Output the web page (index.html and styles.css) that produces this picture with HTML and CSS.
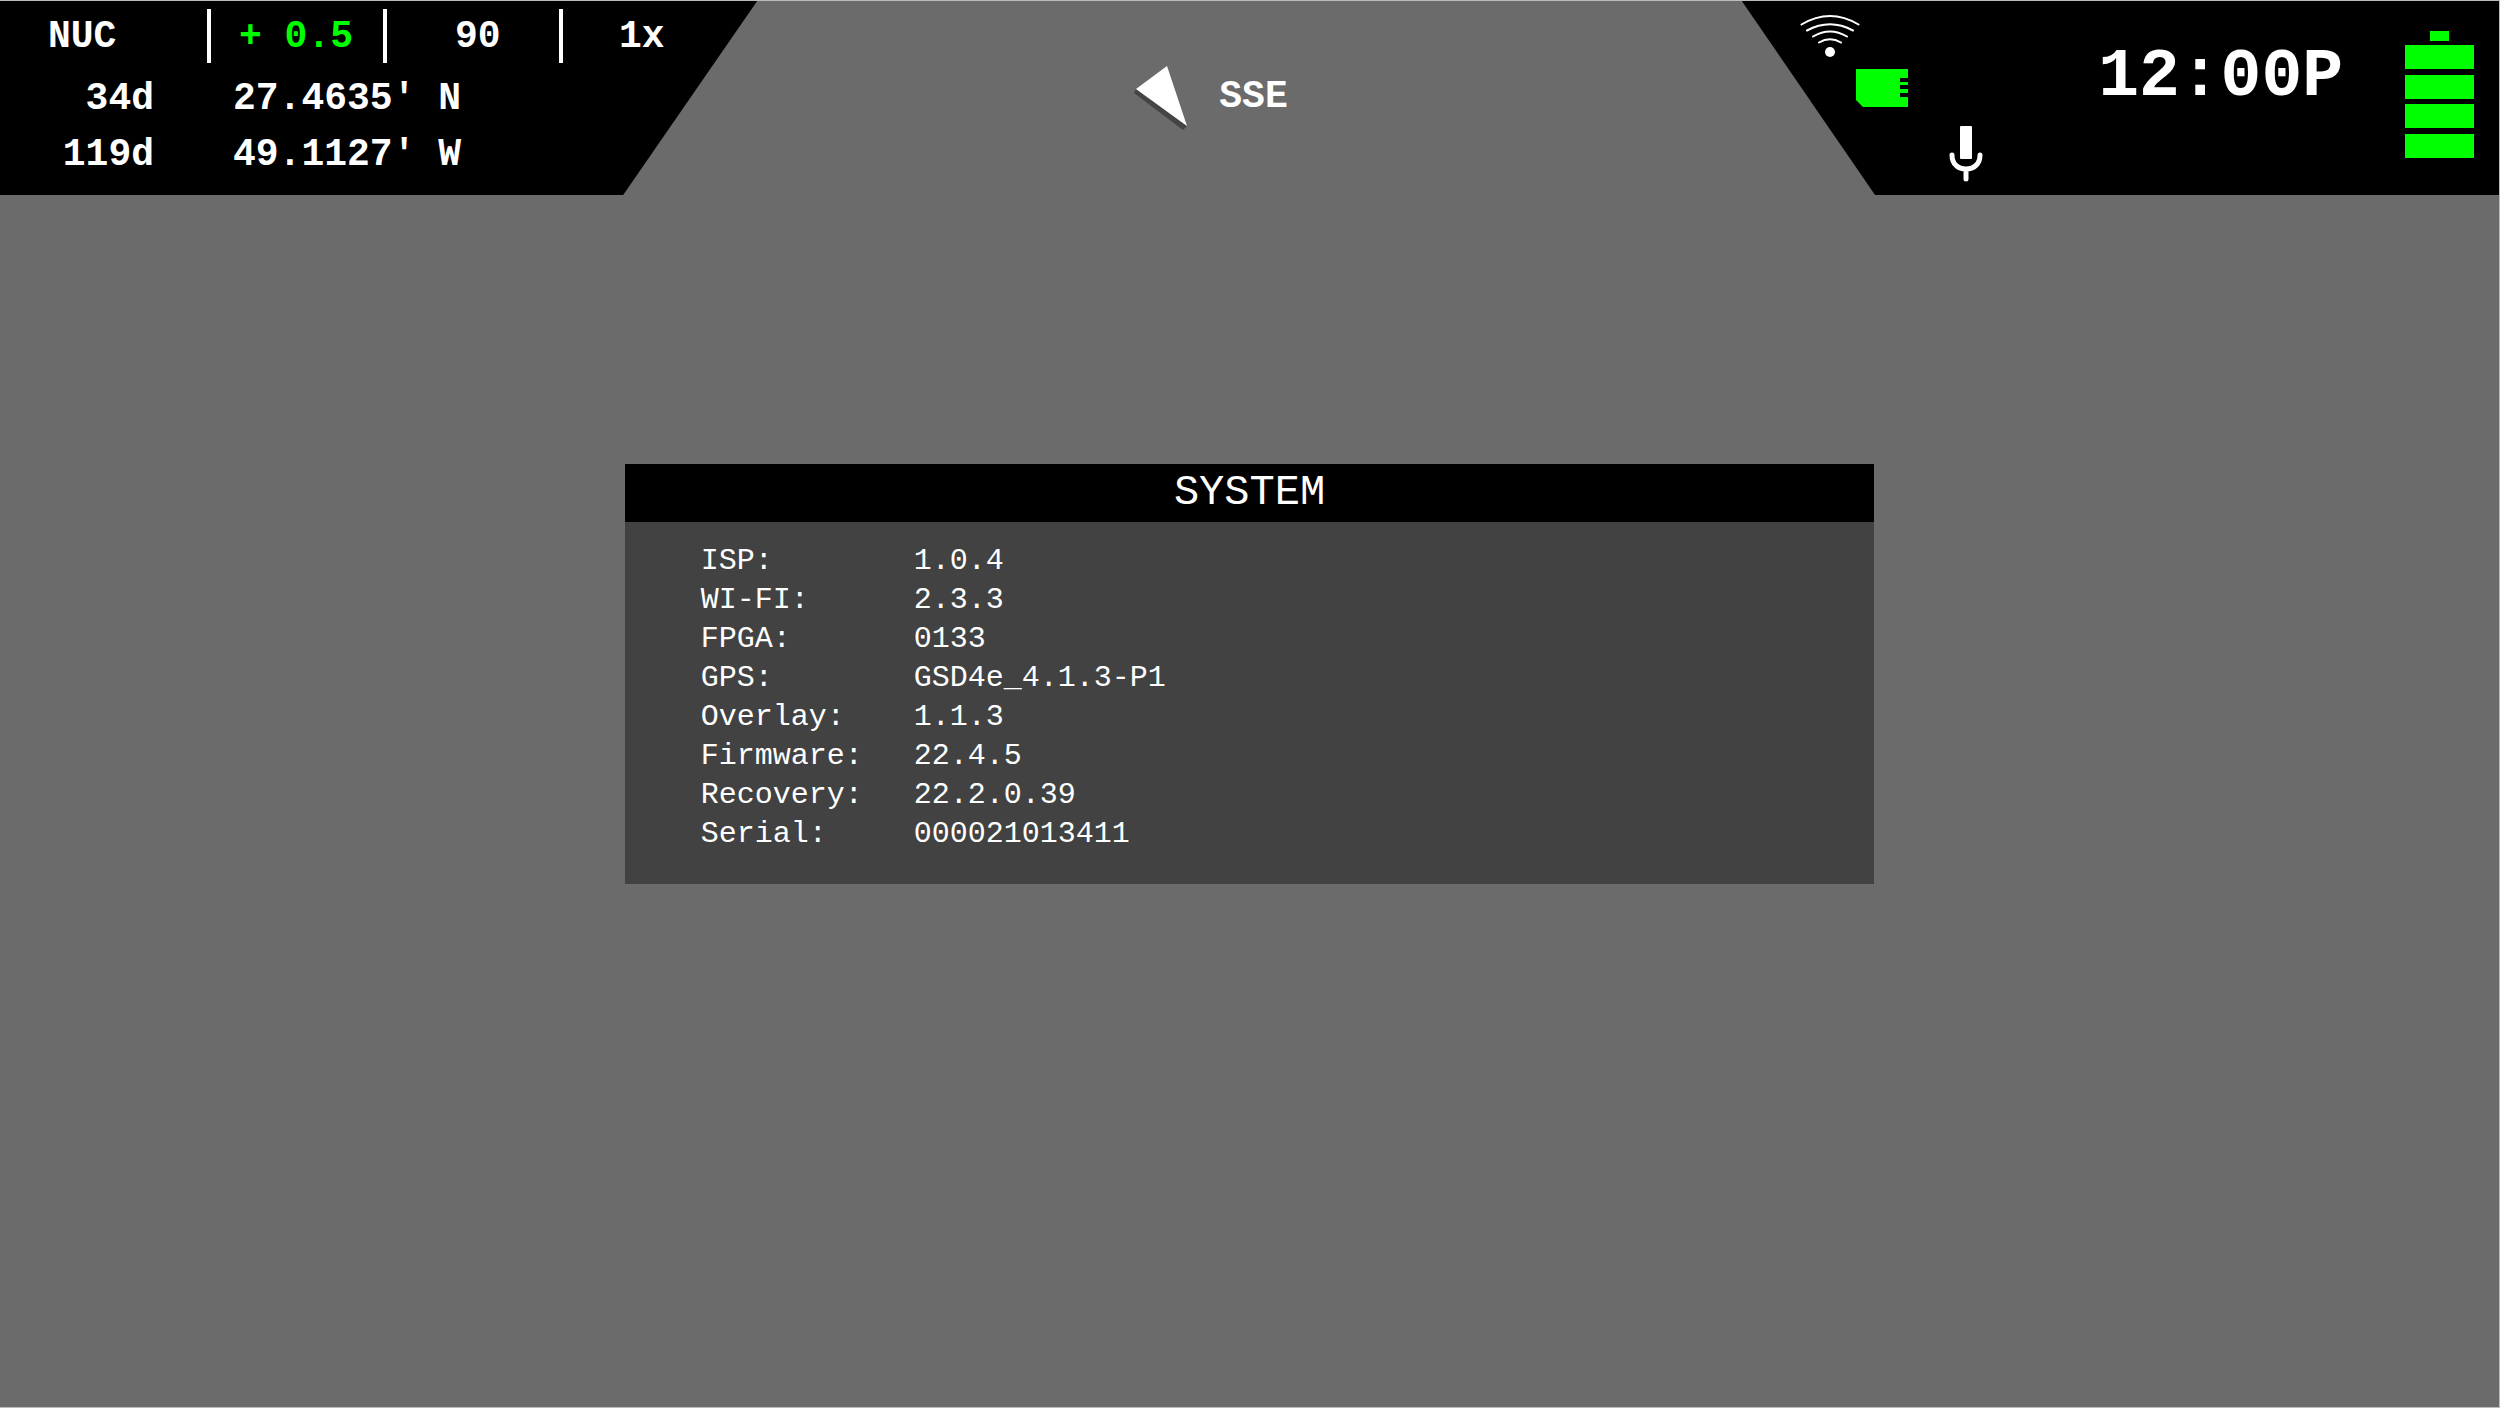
FILE: index.html
```
<!DOCTYPE html>
<html lang="en">
<head>
    <meta charset="UTF-8">
    <meta name="viewport" content="width=device-width, initial-scale=1.0">
    <title>System</title>
    <link rel="stylesheet" href="styles.css">
</head>
<body>
    <header class="hud">
        <div class="readout">
            <div class="modes">
                <span class="mode nuc">NUC</span>
                <span class="mode offset">+ 0.5</span>
                <span class="mode rate">90</span>
                <span class="mode zoom">1x</span>
            </div>
            <div class="coords">
                <span class="deg">34d</span>
                <span>27.4635' N</span>
                <span class="deg">119d</span>
                <span>49.1127' W</span>
            </div>
        </div>
        <div class="compass">
            <svg width="56" height="66" viewBox="0 0 56 66" aria-hidden="true">
                <path d="M2 25 L0 29 L49 66 L53 62 Z" fill="#444"/>
                <path d="M2 25 L33 2 L53 62 Z" fill="#fff"/>
            </svg>
            <span>SSE</span>
        </div>
        <div class="status">
            <div class="icons">
                <svg class="wifi" width="60" height="44" viewBox="0 0 60 44" aria-hidden="true">
                    <g fill="none" stroke="#fff" stroke-width="2" stroke-linecap="round">
                        <path d="M1.5 10.5 Q30 -6.500 58.500 10.500"/>
                        <path d="M7 16.500 Q30 4 53 16.500"/>
                        <path d="M13 22.500 Q30 12.500 47 22.500"/>
                        <path d="M19 28.500 Q30 22 41 28.500"/>
                    </g>
                    <circle cx="30" cy="38" r="5" fill="#fff"/>
                </svg>
                <svg class="card" width="52" height="38" viewBox="0 0 52 38" aria-hidden="true">
                    <path d="M0 0H52V9H44V13H52V16H44V20H52V24H44V28H52V38H7L0 31Z" fill="#0f0"/>
                </svg>
                <svg class="mic" width="34" height="56" viewBox="0 0 34 56" aria-hidden="true">
                    <rect x="11" y="0" width="12" height="33" rx="1" fill="#fff"/>
                    <path d="M3 29 C3 38 9 43 17 43 S31 38 31 29 M17 43 V53" fill="none" stroke="#fff" stroke-width="5" stroke-linecap="round"/>
                </svg>
            </div>
            <time class="clock">12:00P</time>
            <svg class="battery" width="69" height="127" viewBox="0 0 69 127" aria-hidden="true">
                <path d="M25 0H44V10H25Z M0 14H69V38H0Z M0 44H69V68H0Z M0 73H69V97H0Z M0 103H69V127H0Z" fill="#0f0"/>
            </svg>
        </div>
    </header>
    <main class="panel">
        <h1 class="title">SYSTEM</h1>
        <div class="content">
            <table class="info">
                <tr><th scope="row">ISP:</th><td>1.0.4</td></tr>
                <tr><th scope="row">WI-FI:</th><td>2.3.3</td></tr>
                <tr><th scope="row">FPGA:</th><td>0133</td></tr>
                <tr><th scope="row">GPS:</th><td>GSD4e_4.1.3-P1</td></tr>
                <tr><th scope="row">Overlay:</th><td>1.1.3</td></tr>
                <tr><th scope="row">Firmware:</th><td>22.4.5</td></tr>
                <tr><th scope="row">Recovery:</th><td>22.2.0.39</td></tr>
                <tr><th scope="row">Serial:</th><td>000021013411</td></tr>
            </table>
        </div>
    </main>
</body>
</html>
```

FILE: styles.css
```
*{
    box-sizing: border-box;
}
body{
    margin: 0;
    min-height: 100vh;
    border: 1px solid #bbbbbb;
    border-left: 0;
    background: #6b6b6b;
    color: white;
    font-family: "Liberation Mono",monospace;
}
svg{
    display: block;
    flex: none;
}

/* top bar */
.hud{
    display: flex;
    justify-content: space-between;
    font-size: 38px;
    font-weight: bold;
    line-height: 56px;
    white-space: nowrap;
}
.readout,.status{
    width: 30.3%;
    background: black;
}
.readout{
    padding: 8px 0 12px;
    clip-path: polygon(0 0,100% 0,82.3% 100%,0 100%);
}
.modes{
    display: grid;
    grid-template-columns: 211px 176px 176px 1fr;
    margin-bottom: 8px;
}
.mode{
    height: 54px;
    border-right: 4px solid white;
}
.nuc{
    padding-left: 48px;
}
.offset{
    padding-left: 28px;
    color: #00ff00;
}
.rate{
    padding-left: 68px;
}
.zoom{
    padding-left: 56px;
    border-right: 0;
}
.coords{
    display: grid;
    grid-template-columns: 154px 1fr;
    column-gap: 79px;
}
.deg{
    text-align: right;
}
.compass{
    flex: 1;
    display: flex;
    justify-content: center;
    align-items: center;
    align-self: flex-start;
    gap: 29px;
    padding: 63px 77px 0 0;
}
.status{
    display: flex;
    align-items: flex-start;
    padding: 13px 25px 12px 58px;
    clip-path: polygon(0 0,100% 0,100% 100%,17.6% 100%);
}
.card{
    margin: 11px 0 19px 56px;
}
.mic{
    margin-left: 149px;
}
.clock{
    margin: 24px 62px 0 auto;
    font-size: 68px;
    line-height: 78px;
}
.battery{
    margin-top: 17px;
}

/* system window */
.panel{
    width: 50%;
    margin: 269px auto 0;
}
.title{
    margin: 0;
    background: black;
    font-size: 42px;
    font-weight: normal;
    line-height: 58px;
    text-align: center;
}
.content{
    padding: 20px 76px 30px;
    background: #424242;
}
.info{
    border-collapse: collapse;
    font-size: 30px;
    line-height: 39px;
}
.info th,.info td{
    padding: 0;
    font-weight: normal;
    text-align: left;
}
.info th{
    width: 213px;
}
```
